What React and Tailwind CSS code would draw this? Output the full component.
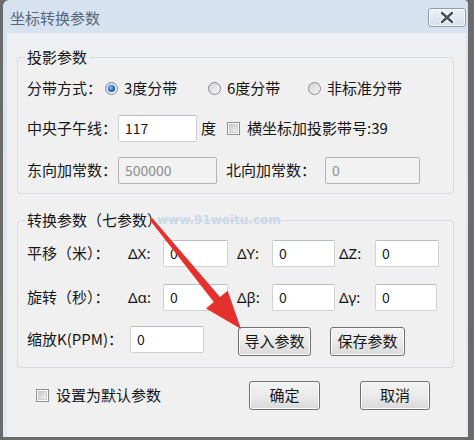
import React from "react";

function Radio({ checked }) {
  return (
    <svg width="13" height="13" viewBox="0 0 13 13" className="shrink-0">
      <defs>
        <linearGradient id={checked ? "rgOn" : "rgOff"} x1="0" y1="0" x2="1" y2="1">
          <stop offset="0" stopColor="#cfcfcf" />
          <stop offset="1" stopColor="#fbfbfb" />
        </linearGradient>
        <radialGradient id="dot" cx="0.4" cy="0.4" r="0.7">
          <stop offset="0" stopColor="#9fd0ff" />
          <stop offset="0.5" stopColor="#2a78d6" />
          <stop offset="1" stopColor="#124a9a" />
        </radialGradient>
      </defs>
      <circle cx="6.5" cy="6.5" r="6" fill={checked ? "url(#rgOn)" : "url(#rgOff)"} stroke="#858a91" />
      {checked && <circle cx="6.5" cy="6.5" r="3.6" fill="url(#dot)" />}
    </svg>
  );
}

function Check() {
  return (
    <svg width="13" height="13" viewBox="0 0 13 13" className="shrink-0">
      <defs>
        <linearGradient id="cg" x1="0" y1="0" x2="1" y2="1">
          <stop offset="0" stopColor="#c4c4c4" />
          <stop offset="1" stopColor="#f6f6f6" />
        </linearGradient>
      </defs>
      <rect x="0.5" y="0.5" width="12" height="12" fill="#fdfdfd" stroke="#8e8f8f" />
      <rect x="2.5" y="2.5" width="8" height="8" fill="url(#cg)" stroke="#b9b9b9" strokeWidth="0.6" />
    </svg>
  );
}

function Field({ className, value, disabled }) {
  return (
    <div
      className={
        "flex h-[27px] shrink-0 items-center rounded-[2px] border pl-[6px] text-[14px] " +
        (disabled
          ? "border-[#b3b3b3] bg-[#f2f2f2] text-[#8e8e8e] "
          : "border-[#cfd3d8] border-t-[#b9bec5] bg-white text-[#1a1a1a] ") +
        className
      }
    >
      {value}
    </div>
  );
}

function Btn({ className, children }) {
  return (
    <div
      className={
        "flex h-[29px] shrink-0 items-center justify-center rounded-[3px] border border-[#707070] bg-gradient-to-b from-[#f3f3f3] via-[#ebebeb] to-[#d9d9d9] text-[15px] shadow-[inset_0_0_0_1px_#fbfbfb] " +
        className
      }
    >
      {children}
    </div>
  );
}

function Delta({ className, children }) {
  return <span className={"shrink-0 font-['Noto_Sans','DejaVu_Sans',sans-serif] text-[15px] " + className}>{children}</span>;
}

export default function App() {
  return (
    <div className="relative h-[440px] w-[474px] overflow-hidden bg-[#6b6b6b] pb-[3px] pl-[3px] pr-[6px] font-['Noto_Sans_CJK_SC','Noto_Sans',sans-serif] text-[15px] text-[#151515]">
      <div className="flex h-full flex-col rounded-tl-[6px] rounded-tr-[4px] bg-gradient-to-b from-[#d6e2ef] via-[#dde6f0] to-[#e4eaf1]">
        {/* title bar */}
        <div className="flex h-[33px] shrink-0 items-start justify-between pl-[7px] pr-[2px]">
          <span className="mt-[9px] text-[15px] leading-[18px] text-[#56667c]">坐标转换参数</span>
          <div className="mt-[8px] flex h-[19px] w-[38px] items-center justify-center rounded-[3px] border border-[#8d9db2] bg-gradient-to-b from-[#eef3f9] to-[#d3dde9] shadow-[inset_0_0_0_1px_#f7fafd]">
            <svg width="18" height="13" viewBox="0 0 18 13">
              <path d="M4 2 L14 11 M14 2 L4 11" stroke="#ffffff" strokeWidth="5" strokeLinecap="round" />
              <path d="M4 2 L14 11 M14 2 L4 11" stroke="#4a525d" strokeWidth="2.6" strokeLinecap="round" />
            </svg>
          </div>
        </div>

        {/* client area */}
        <div className="ml-[4px] mr-[2px] flex flex-1 flex-col bg-gradient-to-b from-[#eceff3] to-[#f0f0f0] to-[30px] pt-[13px]">
          {/* group 1 */}
          <fieldset className="ml-[10px] mr-[12px] rounded-[3px] border border-[#d5dbe0] pb-[9px] pl-[9px]">
            <legend className="-ml-[2px] px-[2px] leading-[22px]">投影参数</legend>
            <div className="mt-[6px] flex h-[28px] items-center">
              <span className="w-[78px] shrink-0">分带方式：</span>
              <div className="flex w-[103px] shrink-0 items-center gap-[6px]">
                <Radio checked />
                <span>3度分带</span>
              </div>
              <div className="flex w-[100px] shrink-0 items-center gap-[6px]">
                <Radio />
                <span>6度分带</span>
              </div>
              <div className="flex items-center gap-[6px]">
                <Radio />
                <span>非标准分带</span>
              </div>
            </div>
            <div className="mt-[12px] flex h-[28px] items-center">
              <span className="w-[91px] shrink-0">中央子午线：</span>
              <Field className="w-[79px]" value="117" />
              <span className="ml-[4px]">度</span>
              <span className="ml-[11px] flex items-center">
                <Check />
              </span>
              <span className="ml-[7px]">横坐标加投影带号:39</span>
            </div>
            <div className="mt-[14px] flex h-[28px] items-center">
              <span className="w-[91px] shrink-0">东向加常数：</span>
              <Field className="w-[99px]" value="500000" disabled />
              <span className="ml-[9px] w-[99px] shrink-0">北向加常数：</span>
              <Field className="w-[95px]" value="0" disabled />
            </div>
          </fieldset>

          {/* group 2 */}
          <fieldset className="ml-[10px] mr-[12px] mt-[15px] rounded-[3px] border border-[#d5dbe0] pb-[14px] pl-[9px]">
            <legend className="-ml-[2px] px-[2px] leading-[22px]">转换参数（七参数）</legend>
            <div className="mt-[8px] flex h-[28px] items-center">
              <span className="w-[101px] shrink-0">平移（米）：</span>
              <Delta className="w-[35px]">ΔX:</Delta>
              <Field className="w-[65px]" value="0" />
              <Delta className="ml-[9px] w-[35px]">ΔY:</Delta>
              <Field className="w-[63px]" value="0" />
              <Delta className="ml-[4px] w-[36px]">ΔZ:</Delta>
              <Field className="w-[64px]" value="0" />
            </div>
            <div className="mt-[16px] flex h-[28px] items-center">
              <span className="w-[101px] shrink-0">旋转（秒）：</span>
              <Delta className="w-[35px]">Δα:</Delta>
              <Field className="w-[65px]" value="0" />
              <Delta className="ml-[9px] w-[35px]">Δβ:</Delta>
              <Field className="w-[63px]" value="0" />
              <Delta className="ml-[4px] w-[36px]">Δγ:</Delta>
              <Field className="w-[62px]" value="0" />
            </div>
            <div className="mt-[14px] flex h-[28px] items-center">
              <span className="w-[103px] shrink-0">缩放K(PPM)：</span>
              <Field className="w-[74px]" value="0" />
              <Btn className="ml-[34px] mt-[4px] w-[73px]">导入参数</Btn>
              <Btn className="ml-[19px] mt-[4px] w-[75px]">保存参数</Btn>
            </div>
          </fieldset>

          {/* bottom row */}
          <div className="mt-[13px] flex items-center pl-[29px]">
            <Check />
            <span className="ml-[7px] w-[193px] shrink-0">设置为默认参数</span>
            <Btn className="w-[71px]">确定</Btn>
            <Btn className="ml-[40px] w-[70px]">取消</Btn>
          </div>
        </div>
      </div>

      {/* watermark */}
      <span className="pointer-events-none absolute left-[157px] top-[211px] font-['DejaVu_Sans',sans-serif] text-[12px] font-bold text-[#c9d9ea]">
        www.91weitu.com
      </span>

      {/* red annotation arrow */}
      <svg className="pointer-events-none absolute left-0 top-0" width="474" height="440" viewBox="0 0 474 440">
        <polygon
          points="152.2,218 220,297.1 227.7,290.7 241,329 206.1,308.5 213.8,302.1 149.8,220"
          fill="#e4312b"
        />
      </svg>
    </div>
  );
}
